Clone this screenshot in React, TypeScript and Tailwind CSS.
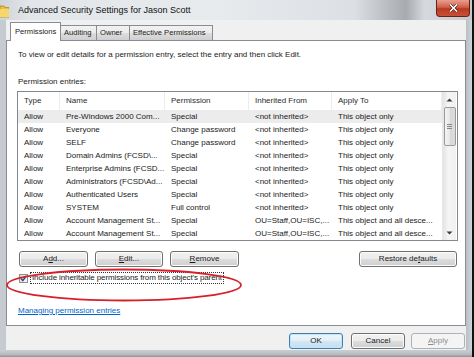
import React from 'react';

const rows = [
  ['Allow', 'Pre-Windows 2000 Com...', 'Special', '<not inherited>', 'This object only'],
  ['Allow', 'Everyone', 'Change password', '<not inherited>', 'This object only'],
  ['Allow', 'SELF', 'Change password', '<not inherited>', 'This object only'],
  ['Allow', 'Domain Admins (FCSD\\...', 'Special', '<not inherited>', 'This object only'],
  ['Allow', 'Enterprise Admins (FCSD...', 'Special', '<not inherited>', 'This object only'],
  ['Allow', 'Administrators (FCSD\\Ad...', 'Special', '<not inherited>', 'This object only'],
  ['Allow', 'Authenticated Users', 'Special', '<not inherited>', 'This object only'],
  ['Allow', 'SYSTEM', 'Full control', '<not inherited>', 'This object only'],
  ['Allow', 'Account Management St...', 'Special', 'OU=Staff,OU=ISC,...', 'This object and all desce...'],
  ['Allow', 'Account Management St...', 'Special', 'OU=Staff,OU=ISC,...', 'This object and all desce...'],
];

const colW = ['w-[42px]', 'w-[105px]', 'w-[84px]', 'w-[83px]', 'w-[110px]'];

const grad = 'bg-[linear-gradient(#f2f2f2,#ebebeb_50%,#dddddd_51%,#cfcfcf)]';
const btn =
  'h-[16px] flex items-center justify-center rounded-[3px] border border-[#707070] bg-[linear-gradient(#f2f2f2,#ebebeb_50%,#dddddd_51%,#cfcfcf)] shadow-[inset_0_0_0_1px_#fcfcfc] text-[#1a1a1a]';

function Btn({ w, children }: { w: string; children: React.ReactNode }) {
  return <div className={`${btn} ${w}`}>{children}</div>;
}

export default function App() {
  return (
    <div className="relative w-[474px] h-[357px] overflow-hidden bg-[#0d140e] font-['Liberation_Sans',Arial,sans-serif] text-[8px] leading-[10px] text-[#1a1a1a]">
      <div className="w-[472px] h-full flex flex-col bg-[#c6cbd1]">
        {/* title bar */}
        <div className="h-[20px] flex items-start bg-[linear-gradient(90deg,#cfd4d9,#e2e5e9_6%,#e8ebee_45%,#dcdfe3_75%,#a7abb0_86%,#d6dade_90%,#c3c8cd)]">
          <svg width="9" height="14" viewBox="0 0 9 14" className="mt-[4px]">
            <path d="M0 2 L4 2 L5 3.5 L9 3.5 L9 13 L0 13 Z" fill="#e8c04a" stroke="#b08a22" strokeWidth="0.8" />
            <path d="M0 5 L9 5 L9 13 L0 13 Z" fill="#f5d76a" />
          </svg>
          <div className="ml-[9px] mt-[5px] text-[9px] leading-[11px] text-[#111]">Advanced Security Settings for Jason Scott</div>
          <div className="ml-auto w-[34px] h-[17px] mr-[2px] rounded-b-[4px] border border-t-0 border-[#6b2216] bg-[linear-gradient(#e8a08e,#d0604a_45%,#b9381f_55%,#c9523a)] flex items-center justify-center">
            <svg width="9" height="8" viewBox="0 0 9 8">
              <path d="M1 0.5 L8 7.5 M8 0.5 L1 7.5" stroke="#3a1410" strokeWidth="2.6" />
              <path d="M1 0.5 L8 7.5 M8 0.5 L1 7.5" stroke="#ffffff" strokeWidth="1.6" />
            </svg>
          </div>
        </div>

        <div className="flex flex-1">
          <div className="w-[6px]" />
          {/* client */}
          <div className="w-[460px] flex flex-col bg-[#f0f0f0]">
            {/* tabs */}
            <div className="h-[20px] flex items-end pl-[4px] relative z-10 text-[7.6px] whitespace-nowrap">
              <div className="w-[51px] h-[19px] mb-[-1px] border border-b-0 border-[#898c95] bg-white flex items-center pl-[4px] pb-[1px]">Permissions</div>
              <div className={`w-[36px] h-[15px] border border-l-0 border-b-0 border-[#898c95] ${grad} flex items-center pl-[3px]`}>Auditing</div>
              <div className={`w-[33px] h-[15px] border border-l-0 border-b-0 border-[#898c95] ${grad} flex items-center pl-[3px]`}>Owner</div>
              <div className={`w-[83px] h-[15px] border border-l-0 border-b-0 border-[#898c95] ${grad} flex items-center pl-[3px]`}>Effective Permissions</div>
            </div>

            {/* panel */}
            <div className="h-[286px] border border-[#898c95] bg-white pl-[10px] pr-[7px] flex flex-col">
              <div className="mt-[9px] ml-px">To view or edit details for a permission entry, select the entry and then click Edit.</div>
              <div className="mt-[17px] ml-px">Permission entries:</div>

              {/* list */}
              <div className="mt-[4px] h-[150px] border border-[#828790] flex">
                <div className="w-[424px] flex flex-col">
                  <div className="h-[18px] flex items-center text-[#2a2a2a]">
                    {['Type', 'Name', 'Permission', 'Inherited From', 'Apply To'].map((h, i) => (
                      <div key={h} className={`${colW[i]} h-full flex items-center pl-[6px] border-r border-[#ececec]`}>{h}</div>
                    ))}
                  </div>
                  {rows.map((r, ri) => (
                    <div key={ri} className={`h-[13px] flex items-center ${ri === 0 ? 'bg-[#ececec]' : ''}`}>
                      {r.map((c, i) => (
                        <div key={i} className={`${colW[i]} pl-[6px] whitespace-nowrap overflow-hidden`}>{c}</div>
                      ))}
                    </div>
                  ))}
                </div>
                {/* scrollbar */}
                <div className="w-[14px] flex flex-col items-center bg-[linear-gradient(90deg,#e3e3e3,#f5f5f5_40%,#f0f0f0)] border-l border-[#e8e8e8]">
                  <svg width="7" height="4" viewBox="0 0 7 4" className="mt-[6px]">
                    <path d="M0.5 3.5 L3.5 0.5 L6.5 3.5 Z" fill="#3a3a3a" />
                  </svg>
                  <div className="mt-[5px] w-[12px] h-[39px] rounded-[2px] border border-[#9a9a9a] bg-[linear-gradient(90deg,#f4f4f4,#e6e6e6_50%,#d8d8d8_51%,#dcdcdc)] flex flex-col items-center justify-center gap-[1px]">
                    <div className="w-[5px] h-px bg-[#888]" />
                    <div className="w-[5px] h-px bg-[#888]" />
                    <div className="w-[5px] h-px bg-[#888]" />
                  </div>
                  <svg width="7" height="4" viewBox="0 0 7 4" className="mt-auto mb-[5px]">
                    <path d="M0.5 0.5 L3.5 3.5 L6.5 0.5 Z" fill="#3a3a3a" />
                  </svg>
                </div>
              </div>

              {/* buttons */}
              <div className="mt-[10px] flex items-center pl-[2px]">
                <Btn w="w-[69px]"><span>A<span className="underline">d</span>d...</span></Btn>
                <div className="w-[7px]" />
                <Btn w="w-[68px]"><span><span className="underline">E</span>dit...</span></Btn>
                <div className="w-[7px]" />
                <Btn w="w-[69px]"><span><span className="underline">R</span>emove</span></Btn>
                <div className="ml-auto mr-[1px]">
                  <Btn w="w-[98px]"><span>Restore de<span className="underline">f</span>aults</span></Btn>
                </div>
              </div>

              {/* checkbox */}
              <div className="mt-[5px] h-[12px] flex items-center pl-[2px]">
                <div className="w-[9px] h-[9px] border border-[#8e8f8f] bg-[linear-gradient(135deg,#dcdcdc,#f8f8f8)] flex items-center justify-center">
                  <svg width="7" height="7" viewBox="0 0 7 7">
                    <path d="M1 3.6 L2.8 5.6 L6.2 1" stroke="#2c4a8a" strokeWidth="1.5" fill="none" />
                  </svg>
                </div>
                <div className="ml-[2px] h-[12px] px-[1px] flex items-center border border-dotted border-[#333] tracking-[-0.12px] whitespace-nowrap">Include inheritable permissions from this object's parent</div>
              </div>

              <div className="mt-[22px] ml-px text-[#0066cc] underline">Managing permission entries</div>
            </div>

            {/* bottom buttons */}
            <div className="flex-1 flex items-start justify-end pt-[7px] pr-px">
              <div className="w-[54px] h-[16px] flex items-center justify-center rounded-[3px] border border-[#3c7fb1] bg-[linear-gradient(#eef6fc,#e2eff9_50%,#d2e6f5_51%,#c8ddee)] shadow-[inset_0_0_0_1px_#c4e5f6]">OK</div>
              <div className="w-[8px]" />
              <Btn w="w-[54px]">Cancel</Btn>
              <div className="w-[6px]" />
              <div className="w-[54px] h-[16px] flex items-center justify-center rounded-[3px] border border-[#adb2b5] bg-[#f4f4f4] text-[#8d8d8d]">
                <span><span className="underline">A</span>pply</span>
              </div>
            </div>
          </div>
          <div className="flex-1 bg-[linear-gradient(90deg,#b9bec4,#d0d5da)]" />
        </div>
        <div className="h-[7px] bg-[linear-gradient(#c9ced3,#b8bdc2_60%,#8e9297)]" />
      </div>

      {/* red highlight ellipse */}
      <svg className="absolute left-[5px] top-[268px]" width="238" height="34" viewBox="0 0 238 34">
        <ellipse cx="119" cy="17" rx="117" ry="15.5" fill="none" stroke="#d8202a" strokeWidth="1.8" />
      </svg>
    </div>
  );
}
